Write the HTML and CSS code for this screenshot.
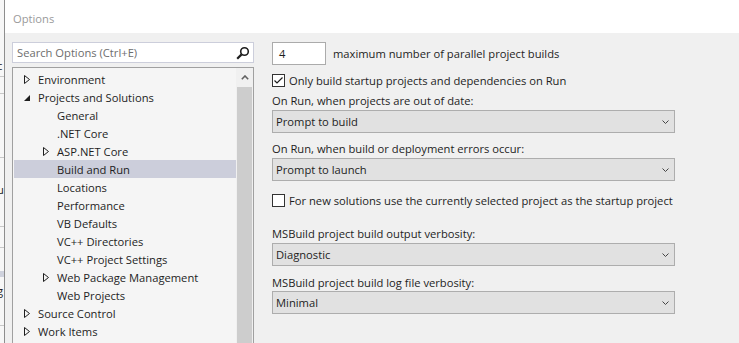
FILE: index.html
```html
<!DOCTYPE html>
<html>
<head>
<meta charset="utf-8">
<title>Options</title>
<link rel="stylesheet" href="styles.css">
</head>
<body>
<div class="desktop">
  <div class="behind">
    <div class="bg-space h60"></div>
    <div class="bg-frag">c</div>
    <div class="bg-space h4"></div>
    <div class="bg-line"></div>
    <div class="bg-space h16"></div>
    <div class="bg-line"></div>
    <div class="bg-space h63"></div>
    <div class="bg-line"></div>
    <div class="bg-space h26"></div>
    <div class="bg-frag">u</div>
    <div class="bg-space h30"></div>
    <div class="bg-line"></div>
    <div class="bg-space h20"></div>
    <div class="bg-line"></div>
    <div class="bg-space h23"></div>
    <div class="bg-band"></div>
    <div class="bg-space h8"></div>
    <div class="bg-frag">g</div>
    <div class="bg-space h28"></div>
    <div class="bg-line"></div>
    <div class="bg-frag">:</div>
  </div>
  <div class="dialog">
    <div class="titlebar">Options</div>
    <div class="content">
      <div class="left">
        <div class="search">
          <span class="placeholder">Search Options (Ctrl+E)</span>
          <svg class="search-icon" width="14" height="14" viewBox="0 0 14 14"><circle cx="8.5" cy="5.5" r="3.8" fill="none" stroke="#1e1e1e" stroke-width="1.6"/><line x1="5.6" y1="8.4" x2="1.2" y2="12.8" stroke="#1e1e1e" stroke-width="2.2"/></svg>
        </div>
        <div class="tree">
          <div class="tree-list">
            <div class="row l0"><span class="arrow"><svg width="7" height="9" viewBox="0 0 7 9"><polygon points="0.5,0.5 5.5,4.5 0.5,8.5" fill="none" stroke="#1e1e1e"/></svg></span><span>Environment</span></div>
            <div class="row l0"><span class="arrow"><svg width="7" height="9" viewBox="0 0 7 9"><polygon points="6,2 6,8 0,8" fill="#1e1e1e"/></svg></span><span>Projects and Solutions</span></div>
            <div class="row l1"><span class="arrow"></span><span>General</span></div>
            <div class="row l1"><span class="arrow"></span><span>.NET Core</span></div>
            <div class="row l1"><span class="arrow"><svg width="7" height="9" viewBox="0 0 7 9"><polygon points="0.5,0.5 5.5,4.5 0.5,8.5" fill="none" stroke="#1e1e1e"/></svg></span><span>ASP.NET Core</span></div>
            <div class="row l1 selected"><span class="arrow"></span><span>Build and Run</span></div>
            <div class="row l1"><span class="arrow"></span><span>Locations</span></div>
            <div class="row l1"><span class="arrow"></span><span>Performance</span></div>
            <div class="row l1"><span class="arrow"></span><span>VB Defaults</span></div>
            <div class="row l1"><span class="arrow"></span><span>VC++ Directories</span></div>
            <div class="row l1"><span class="arrow"></span><span>VC++ Project Settings</span></div>
            <div class="row l1"><span class="arrow"><svg width="7" height="9" viewBox="0 0 7 9"><polygon points="0.5,0.5 5.5,4.5 0.5,8.5" fill="none" stroke="#1e1e1e"/></svg></span><span>Web Package Management</span></div>
            <div class="row l1"><span class="arrow"></span><span>Web Projects</span></div>
            <div class="row l0"><span class="arrow"><svg width="7" height="9" viewBox="0 0 7 9"><polygon points="0.5,0.5 5.5,4.5 0.5,8.5" fill="none" stroke="#1e1e1e"/></svg></span><span>Source Control</span></div>
            <div class="row l0"><span class="arrow"><svg width="7" height="9" viewBox="0 0 7 9"><polygon points="0.5,0.5 5.5,4.5 0.5,8.5" fill="none" stroke="#1e1e1e"/></svg></span><span>Work Items</span></div>
          </div>
          <div class="scrollbar">
            <div class="sb-up"><svg width="8" height="5" viewBox="0 0 8 5"><polyline points="0.8,4.2 4,1 7.2,4.2" fill="none" stroke="#606060" stroke-width="1.6"/></svg></div>
            <div class="sb-thumb"></div>
          </div>
        </div>
      </div>
      <div class="right">
        <div class="num-row">
          <div class="num-input">4</div>
          <span class="text">maximum number of parallel project builds</span>
        </div>
        <div class="check-row first-check">
          <span class="checkbox"><svg width="11" height="11" viewBox="0 0 11 11"><polyline points="1.5,5.5 4,8 9.5,2.5" fill="none" stroke="#1e1e1e" stroke-width="1.2"/></svg></span>
          <span class="text">Only build startup projects and dependencies on Run</span>
        </div>
        <div class="label lbl1">On Run, when projects are out of date:</div>
        <div class="dropdown"><span>Prompt to build</span><svg width="7" height="4" viewBox="0 0 7 4"><polyline points="0.5,0.5 3.5,3.5 6.5,0.5" fill="none" stroke="#444"/></svg></div>
        <div class="label lbl2">On Run, when build or deployment errors occur:</div>
        <div class="dropdown"><span>Prompt to launch</span><svg width="7" height="4" viewBox="0 0 7 4"><polyline points="0.5,0.5 3.5,3.5 6.5,0.5" fill="none" stroke="#444"/></svg></div>
        <div class="check-row second-check">
          <span class="checkbox"></span>
          <span class="text">For new solutions use the currently selected project as the startup project</span>
        </div>
        <div class="label lbl3">MSBuild project build output verbosity:</div>
        <div class="dropdown"><span>Diagnostic</span><svg width="7" height="4" viewBox="0 0 7 4"><polyline points="0.5,0.5 3.5,3.5 6.5,0.5" fill="none" stroke="#444"/></svg></div>
        <div class="label lbl4">MSBuild project build log file verbosity:</div>
        <div class="dropdown"><span>Minimal</span><svg width="7" height="4" viewBox="0 0 7 4"><polyline points="0.5,0.5 3.5,3.5 6.5,0.5" fill="none" stroke="#444"/></svg></div>
      </div>
    </div>
  </div>
</div>
</body>
</html>
```

FILE: styles.css
```css
* { box-sizing: border-box; }
html, body { margin: 0; padding: 0; }
body {
  width: 739px;
  height: 343px;
  overflow: hidden;
  background: #f0f0f0;
  font-family: "Segoe UI", "Open Sans", "Noto Sans", sans-serif;
  font-size: 11.2px;
  color: #1e1e1e;
}
.desktop { display: flex; height: 343px; }

.behind {
  width: 4px;
  flex: none;
  overflow: hidden;
  background: #f7f7f7;
  display: flex;
  flex-direction: column;
}
.bg-space { flex: none; }
.h4 { height: 4px; } .h8 { height: 8px; } .h16 { height: 16px; } .h20 { height: 20px; }
.h23 { height: 23px; } .h26 { height: 26px; } .h28 { height: 28px; } .h30 { height: 30px; }
.h60 { height: 60px; } .h63 { height: 63px; }
.bg-line { height: 1px; background: #c8c8c8; flex: none; }
.bg-band { height: 6px; background: #cfd2dd; flex: none; }
.bg-frag { height: 12px; line-height: 12px; margin-left: -3px; flex: none; }

.dialog {
  flex: 1;
  display: flex;
  flex-direction: column;
  border-left: 1px solid #8e8e8e;
  background: #f0f0f0;
}
.titlebar {
  height: 33px;
  flex: none;
  background: #ffffff;
  padding: 5px 0 0 8px;
  line-height: 28px;
  color: #9a9a9a;
}
.content {
  flex: 1;
  display: flex;
  padding: 9px 0 0 7px;
  min-height: 0;
}
.left {
  width: 242px;
  flex: none;
  display: flex;
  flex-direction: column;
}
.search {
  height: 21px;
  flex: none;
  border: 1px solid #cccedb;
  background: #ffffff;
  display: flex;
  align-items: center;
  justify-content: space-between;
  padding: 0 3px 0 4px;
}
.placeholder { color: #6d6d6d; }
.tree {
  margin-top: 4px;
  flex: 1;
  display: flex;
  border: 1px solid #a0a0a0;
  border-bottom: none;
  background: #f5f5f5;
  min-height: 0;
}
.tree-list {
  flex: 1;
  padding: 2px 0 0 1px;
}
.row {
  height: 18px;
  display: flex;
  align-items: center;
  white-space: nowrap;
}
.row.l0 { padding-left: 10px; }
.row.l1 { padding-left: 29px; }
.row.selected { background: #cccedb; }
.arrow {
  width: 14px;
  flex: none;
  display: flex;
  align-items: center;
}
.scrollbar {
  width: 17px;
  flex: none;
  display: flex;
  flex-direction: column;
  background: #f0f0f0;
}
.sb-up {
  height: 19px;
  flex: none;
  display: flex;
  align-items: center;
  justify-content: center;
}
.sb-thumb {
  flex: 1;
  margin: 0 1px;
  background: #cdcdcd;
}

.right {
  margin-left: 18px;
  width: 403px;
  flex: none;
  display: flex;
  flex-direction: column;
}
.num-row {
  display: flex;
  align-items: center;
  height: 23px;
}
.num-input {
  width: 54px;
  height: 23px;
  border: 1px solid #ababab;
  background: #ffffff;
  padding-left: 6px;
  line-height: 21px;
  margin-right: 7px;
}
.check-row {
  display: flex;
  align-items: center;
  height: 16px;
}
.first-check { margin-top: 7px; }
.second-check { margin-top: 11px; }
.checkbox {
  width: 13px;
  height: 13px;
  border: 1px solid #333333;
  background: #ffffff;
  margin-right: 4px;
  display: flex;
  align-items: center;
  justify-content: center;
  flex: none;
}
.label {
  height: 16px;
  line-height: 16px;
  white-space: nowrap;
}
.lbl1 { margin-top: 5px; margin-bottom: 1px; }
.lbl2 { margin-top: 8px; margin-bottom: 1px; }
.lbl3 { margin-top: 18px; margin-bottom: 1px; }
.lbl4 { margin-top: 9px; margin-bottom: 0; }
.dropdown {
  height: 23px;
  flex: none;
  border: 1px solid #adadad;
  background: #e1e1e1;
  display: flex;
  align-items: center;
  justify-content: space-between;
  padding: 0 5px 0 3px;
}
.text { white-space: nowrap; }
```
